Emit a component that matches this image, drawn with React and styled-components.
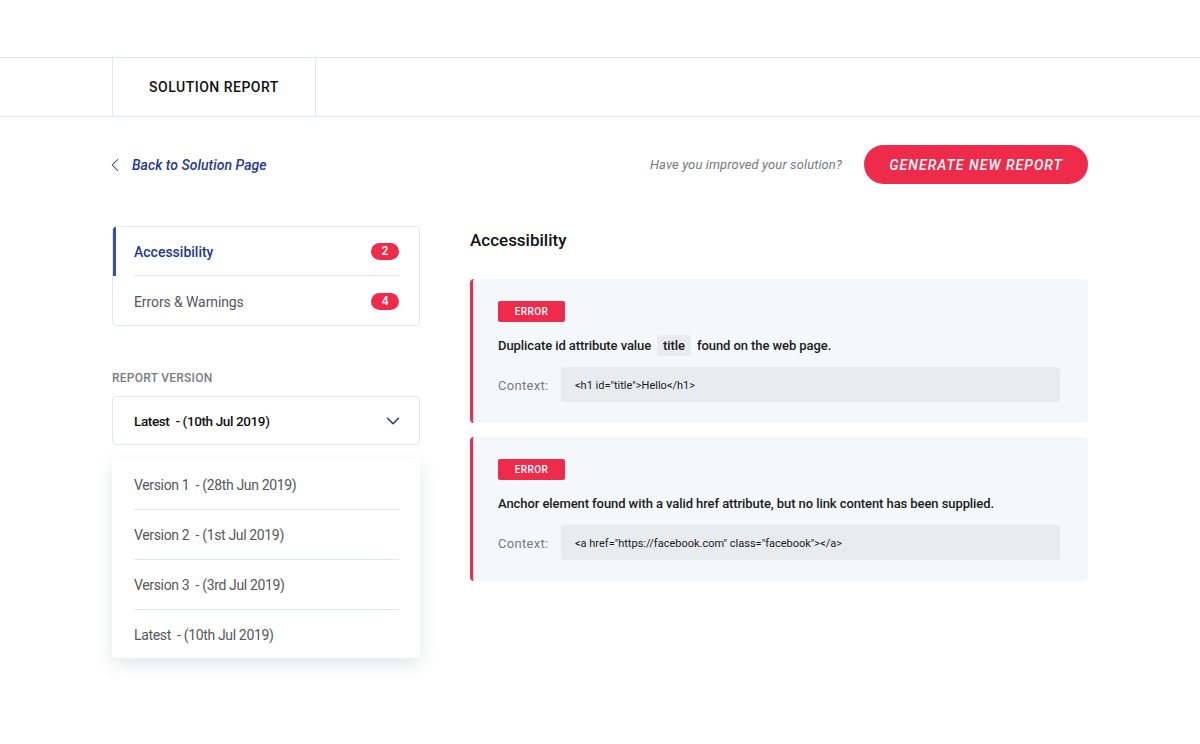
import React from "react";
import styled, { createGlobalStyle } from "styled-components";
import { ChevronDown, ChevronLeft } from "lucide-react";

const GlobalStyle = createGlobalStyle`
  body {
    margin: 0;
    background: #fff;
    font-family: Roboto, "Liberation Sans", sans-serif;
    color: #111;
  }
  #root {
    min-height: 100vh;
    padding-top: 57px;
    box-sizing: border-box;
  }
`;

const TopBar = styled.header`
  height: 58px;
  border-top: 1px solid #dfe8ea;
  border-bottom: 1px solid #dfe8ea;
  padding-left: 112px;
  display: flex;
`;

const Tab = styled.div`
  width: 202px;
  border-left: 1px solid #dfe8ea;
  border-right: 1px solid #dfe8ea;
  display: flex;
  align-items: center;
  justify-content: center;
  font-size: 14px;
  font-weight: 500;
  letter-spacing: 0.5px;
  color: #111;
`;

const Page = styled.main`
  padding: 28px 112px 0;
`;

const ActionRow = styled.div`
  display: flex;
  align-items: center;
  justify-content: space-between;
  height: 39px;
`;

const BackLink = styled.a`
  display: flex;
  align-items: center;
  gap: 6px;
  font-size: 14px;
  font-style: italic;
  font-weight: 500;
  letter-spacing: 0.05px;
  color: #23398f;
  svg {
    margin-left: -8px;
  }
`;

const ActionGroup = styled.div`
  display: flex;
  align-items: center;
  gap: 22px;
`;

const Hint = styled.span`
  font-size: 13px;
  font-style: italic;
  letter-spacing: 0.1px;
  color: #77797c;
`;

const GenerateButton = styled.button`
  width: 224px;
  height: 39px;
  border: 0;
  border-radius: 20px;
  background: #ef2b4c;
  color: #fff;
  font-family: inherit;
  font-size: 14px;
  font-style: italic;
  font-weight: 500;
  letter-spacing: 1.05px;
`;

const Columns = styled.div`
  display: grid;
  grid-template-columns: 308px 618px;
  justify-content: space-between;
  margin-top: 42px;
`;

const SideNav = styled.nav`
  border: 1px solid #dfe8ea;
  border-radius: 4px;
  height: 100px;
  box-sizing: border-box;
  overflow: hidden;
`;

const NavItem = styled.div`
  height: 48px;
  position: relative;
  display: flex;
  align-items: center;
  justify-content: space-between;
  margin: 0 20px 0 21px;
  font-size: 14px;
  font-weight: ${(p) => (p.$active ? 500 : 400)};
  color: ${(p) => (p.$active ? "#23398f" : "#55575a")};
  letter-spacing: ${(p) => (p.$active ? "0" : "-0.1px")};
  & + & {
    height: 50px;
    border-top: 1px solid #dfe8ea;
  }
  ${(p) =>
    p.$active &&
    `&::before {
      content: "";
      position: absolute;
      left: -22px;
      top: -1px;
      bottom: -1px;
      width: 4px;
      background: #3a4fa3;
    }`}
`;

const NavLabel = styled.span`
  padding-top: 1px;
`;

const Count = styled.span`
  width: 28px;
  height: 17px;
  border-radius: 9px;
  background: #ef2b4c;
  color: #fff;
  font-size: 12px;
  font-weight: 500;
  display: flex;
  align-items: center;
  justify-content: center;
`;

const VersionLabel = styled.div`
  margin-top: 45px;
  font-size: 12px;
  font-weight: 500;
  letter-spacing: 0.25px;
  line-height: 14px;
  color: #7a7c7f;
`;

const Select = styled.div`
  margin-top: 11px;
  height: 49px;
  box-sizing: border-box;
  border: 1px solid #dfe8ea;
  border-radius: 4px;
  padding: 1px 20px 0 21px;
  display: flex;
  align-items: center;
  justify-content: space-between;
  font-size: 13.5px;
  font-weight: 500;
  letter-spacing: -0.38px;
  white-space: pre;
  color: #111;
  svg {
    margin: -1px -5px 0 0;
  }
`;

const Menu = styled.ul`
  list-style: none;
  margin: 14px 0 0;
  padding: 1px 21px 0 22px;
  height: 199px;
  box-sizing: border-box;
  border-radius: 4px;
  background: #fff;
  box-shadow: 0 6px 18px rgba(40, 60, 70, 0.13);
`;

const MenuItem = styled.li`
  height: 50px;
  padding-top: 1px;
  box-sizing: border-box;
  display: flex;
  align-items: center;
  font-size: 14px;
  letter-spacing: -0.35px;
  white-space: pre;
  color: #55575a;
  &:not(:last-child) {
    border-bottom: 1px solid #dfe8ea;
  }
  &:last-child {
    height: 48px;
  }
`;

const Title = styled.h2`
  margin: 4px 0 0;
  font-size: 17px;
  line-height: 20px;
  font-weight: 500;
  color: #111;
`;

const Cards = styled.div`
  margin-top: 29px;
  display: flex;
  flex-direction: column;
  gap: 14px;
`;

const Card = styled.article`
  height: 144px;
  box-sizing: border-box;
  padding: 22px 28px 0 25px;
  background: #f4f8fb;
  border-left: 3px solid #ef2b4c;
  border-radius: 4px;
`;

const ErrorTag = styled.span`
  display: flex;
  align-items: center;
  justify-content: center;
  width: 67px;
  height: 21px;
  border-radius: 2px;
  background: #ef2b4c;
  color: #fff;
  font-size: 10px;
  font-weight: 500;
  letter-spacing: 0.4px;
`;

const Message = styled.p`
  margin: 12px 0 0;
  height: 22px;
  display: flex;
  align-items: center;
  font-size: 13px;
  font-weight: 500;
  letter-spacing: -0.08px;
  color: #1a1b1d;
`;

const Code = styled.span`
  margin: 0 6px;
  padding: 0 6px;
  height: 21px;
  border-radius: 3px;
  display: flex;
  align-items: center;
  background: #e8ecef;
`;

const ContextRow = styled.div`
  margin-top: 11px;
  display: flex;
  align-items: center;
`;

const ContextLabel = styled.span`
  width: 63px;
  padding-top: 1px;
  font-size: 13px;
  letter-spacing: 0.3px;
  color: #77797c;
`;

const Snippet = styled.code`
  flex: 1;
  height: 35px;
  box-sizing: border-box;
  padding: 1px 14px 0;
  border-radius: 3px;
  background: #e8ecef;
  display: flex;
  align-items: center;
  font-family: inherit;
  font-size: 11px;
  color: #1a1b1d;
`;

const navItems = [
  { label: "Accessibility", count: 2, active: true },
  { label: "Errors & Warnings", count: 4 },
];

const versions = [
  "Version 1  - (28th Jun 2019)",
  "Version 2  - (1st Jul 2019)",
  "Version 3  - (3rd Jul 2019)",
  "Latest  - (10th Jul 2019)",
];

export default function App() {
  return (
    <>
      <GlobalStyle />
      <TopBar>
        <Tab>SOLUTION REPORT</Tab>
      </TopBar>
      <Page>
        <ActionRow>
          <BackLink>
            <ChevronLeft size={22} strokeWidth={1.1} />
            Back to Solution Page
          </BackLink>
          <ActionGroup>
            <Hint>Have you improved your solution?</Hint>
            <GenerateButton>GENERATE NEW REPORT</GenerateButton>
          </ActionGroup>
        </ActionRow>
        <Columns>
          <aside>
            <SideNav>
              {navItems.map((item) => (
                <NavItem key={item.label} $active={item.active}>
                  <NavLabel>{item.label}</NavLabel>
                  <Count>{item.count}</Count>
                </NavItem>
              ))}
            </SideNav>
            <VersionLabel>REPORT VERSION</VersionLabel>
            <Select>
              {"Latest  - (10th Jul 2019)"}
              <ChevronDown size={22} strokeWidth={1.7} color="#23398f" />
            </Select>
            <Menu>
              {versions.map((v) => (
                <MenuItem key={v}>{v}</MenuItem>
              ))}
            </Menu>
          </aside>
          <section>
            <Title>Accessibility</Title>
            <Cards>
              <Card>
                <ErrorTag>ERROR</ErrorTag>
                <Message>
                  Duplicate id attribute value <Code>title</Code> found on the web page.
                </Message>
                <ContextRow>
                  <ContextLabel>Context:</ContextLabel>
                  <Snippet>{'<h1 id="title">Hello</h1>'}</Snippet>
                </ContextRow>
              </Card>
              <Card>
                <ErrorTag>ERROR</ErrorTag>
                <Message>
                  Anchor element found with a valid href attribute, but no link content has been supplied.
                </Message>
                <ContextRow>
                  <ContextLabel>Context:</ContextLabel>
                  <Snippet>{'<a href="https://facebook.com" class="facebook"></a>'}</Snippet>
                </ContextRow>
              </Card>
            </Cards>
          </section>
        </Columns>
      </Page>
    </>
  );
}
